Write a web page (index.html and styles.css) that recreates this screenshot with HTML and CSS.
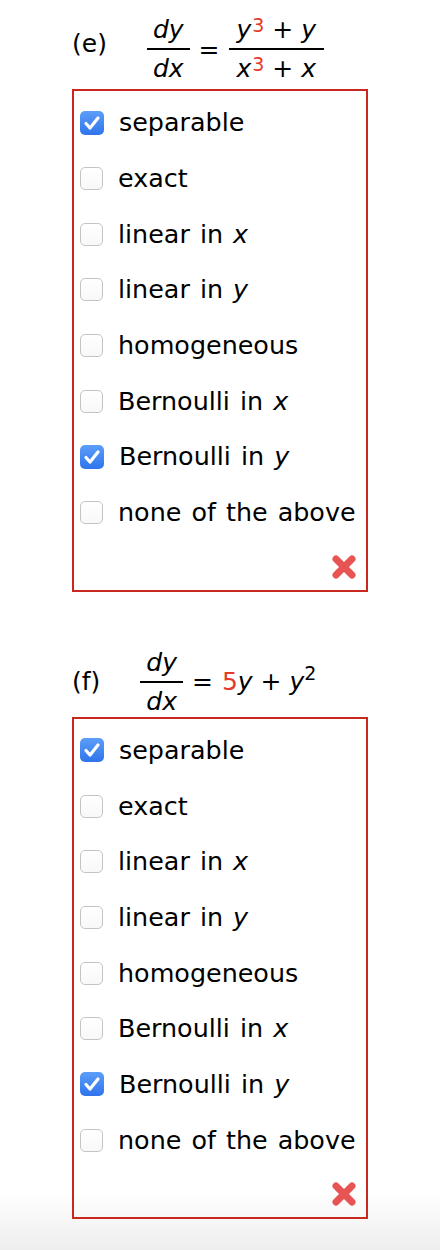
FILE: index.html
```html
<!DOCTYPE html>
<html lang="en">
<head>
    <meta charset="UTF-8">
    <meta name="viewport" content="width=device-width, initial-scale=1.0">
    <title>Classify the equations</title>
    <link rel="stylesheet" href="styles.css">
</head>
<body>
    <div class="page">
        <div class="question question-e">
            <div class="prompt">
                <span class="label label-raised">(e)</span>
                <span class="frac"><span class="num"><var>dy</var></span><span class="den"><var>dx</var></span></span>
                <span class="eq">=</span>
                <span class="frac frac-wide">
                    <span class="num"><var>y</var><sup class="given">3</sup> + <var>y</var></span>
                    <span class="den"><var>x</var><sup class="given">3</sup> + <var>x</var></span>
                </span>
            </div>
            <div class="answers">
                <label class="option"><span class="box checked"><svg viewBox="0 0 24 24"><path d="M6 12.5l4 4.5 8-10"/></svg></span>separable</label>
                <label class="option"><span class="box"></span>exact</label>
                <label class="option"><span class="box"></span>linear in&nbsp;<var>x</var></label>
                <label class="option"><span class="box"></span>linear in&nbsp;<var>y</var></label>
                <label class="option"><span class="box"></span>homogeneous</label>
                <label class="option"><span class="box"></span>Bernoulli in&nbsp;<var>x</var></label>
                <label class="option"><span class="box checked"><svg viewBox="0 0 24 24"><path d="M6 12.5l4 4.5 8-10"/></svg></span>Bernoulli in&nbsp;<var>y</var></label>
                <label class="option"><span class="box"></span>none of the above</label>
                <div class="mark">
                    <svg viewBox="0 0 28 28"><path d="M6 6L22 22M22 6L6 22"/></svg>
                </div>
            </div>
        </div>

        <div class="question question-f">
            <div class="prompt">
                <span class="label">(f)</span>
                <span class="frac"><span class="num"><var>dy</var></span><span class="den"><var>dx</var></span></span>
                <span class="eq">=</span>
                <span class="expr"><span class="given">5</span><var>y</var> + <var>y</var><sup>2</sup></span>
            </div>
            <div class="answers">
                <label class="option"><span class="box checked"><svg viewBox="0 0 24 24"><path d="M6 12.5l4 4.5 8-10"/></svg></span>separable</label>
                <label class="option"><span class="box"></span>exact</label>
                <label class="option"><span class="box"></span>linear in&nbsp;<var>x</var></label>
                <label class="option"><span class="box"></span>linear in&nbsp;<var>y</var></label>
                <label class="option"><span class="box"></span>homogeneous</label>
                <label class="option"><span class="box"></span>Bernoulli in&nbsp;<var>x</var></label>
                <label class="option"><span class="box checked"><svg viewBox="0 0 24 24"><path d="M6 12.5l4 4.5 8-10"/></svg></span>Bernoulli in&nbsp;<var>y</var></label>
                <label class="option"><span class="box"></span>none of the above</label>
                <div class="mark">
                    <svg viewBox="0 0 28 28"><path d="M6 6L22 22M22 6L6 22"/></svg>
                </div>
            </div>
        </div>
    </div>
</body>
</html>
```

FILE: styles.css
```css
html {
    min-height: 1250px;
    background: linear-gradient(to bottom, #fff 0, #fff 1192px, #eeeeee 1250px);
}

body {
    margin: 0;
    font-family: "DejaVu Sans", Verdana, sans-serif;
    font-size: 25px;
    color: #000;
}

.page {
    padding: 15px 0 0 72px;
}

var {
    font-style: italic;
}

.given {
    color: #e5392b;
}

/* equation header */
.prompt {
    display: flex;
    align-items: center;
    line-height: 29px;
}

.label {
    margin-right: 40px;
}

.label-raised {
    margin-bottom: 11px;
}

.frac {
    display: inline-flex;
    flex-direction: column;
    align-items: stretch;
    text-align: center;
}

.frac .num {
    padding: 0 6px 4px;
    white-space: nowrap;
}

.frac .den {
    padding: 4px 6px 0;
    border-top: 2px solid #000;
    white-space: nowrap;
}

.frac-wide .num,
.frac-wide .den {
    padding-left: 8px;
    padding-right: 8px;
}

sup {
    font-size: 19px;
    line-height: 0;
    vertical-align: 10px;
}

.frac sup {
    vertical-align: 6px;
    margin-left: 1px;
}

.eq {
    margin: 0 9px;
}

.expr {
    white-space: nowrap;
}

/* answer box */
.question-e .prompt {
    margin-bottom: 6px;
}

.question-f {
    margin-top: 56px;
}

.question-f .prompt {
    margin-bottom: 1px;
}

.answers {
    width: 296px;
    box-sizing: border-box;
    border: 2px solid #c8281e;
    padding: 4px 8px 0 6px;
}

.option {
    display: flex;
    align-items: center;
    height: 55.7px;
    line-height: 29px;
    font-size: 25.4px;
    word-spacing: 2px;
    white-space: nowrap;
}

.box {
    width: 23px;
    height: 23px;
    box-sizing: border-box;
    margin-right: 15px;
    border: 1px solid #c4c4c4;
    border-radius: 5px;
    background: linear-gradient(#ffffff, #f8f8f8);
    flex-shrink: 0;
    display: flex;
}

.box.checked {
    width: 24px;
    height: 24px;
    border: none;
    background: linear-gradient(#5c9ef9, #2f74eb);
}

.box svg {
    width: 24px;
    height: 24px;
}

.box svg path {
    fill: none;
    stroke: #fff;
    stroke-width: 3.2;
    stroke-linecap: round;
    stroke-linejoin: round;
}

.mark {
    display: flex;
    justify-content: flex-end;
    padding: 12px 0 9px;
}

.mark svg {
    width: 28px;
    height: 28px;
    display: block;
}

.mark path {
    stroke: #e65454;
    stroke-width: 7;
    stroke-linecap: round;
}
```
